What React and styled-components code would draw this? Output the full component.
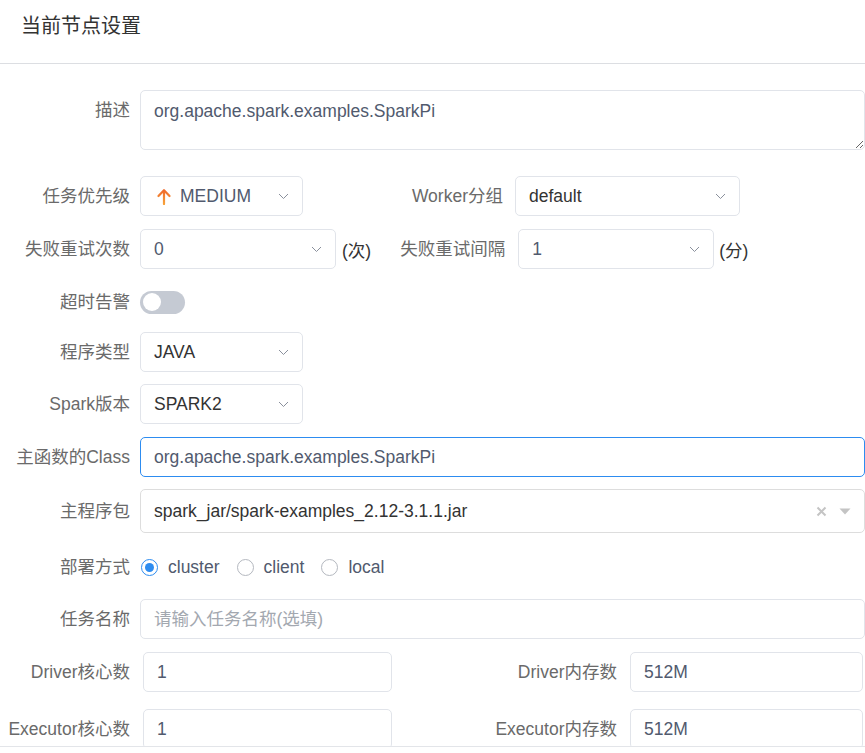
import React from "react";
import styled, { createGlobalStyle } from "styled-components";

const Global = createGlobalStyle`
  html, body { margin: 0; padding: 0; background: #fff; }
  body { font-family: "Liberation Sans", "Noto Sans CJK SC", sans-serif; }
  * { box-sizing: border-box; }
`;

const Page = styled.div`
  width: 865px;
  height: 753px;
  background: #fff;
  overflow: hidden;
`;

const Header = styled.div`
  height: 64px;
  border-bottom: 1px solid #dcdee2;
  padding: 12px 0 0 21px;
`;

const Title = styled.div`
  font-size: 20px;
  line-height: 28px;
  color: #333;
`;

const Body = styled.div`
  height: 683px;
  overflow: hidden;
  border-bottom: 1px solid #e3e5e9;
  padding-top: 26px;
`;

const Item = styled.div`
  display: flex;
  align-items: ${(p) => (p.$top ? "flex-start" : "center")};
  min-height: 40px;
  margin-bottom: ${(p) => p.$mb ?? 13}px;
`;

const Label = styled.div`
  width: ${(p) => p.$w ?? 130}px;
  flex: none;
  text-align: right;
  font-size: 17.5px;
  line-height: 40px;
  color: #6a6a6a;
  white-space: nowrap;
  margin-right: ${(p) => p.$mr ?? 10}px;
`;

const TextArea = styled.textarea`
  width: 725px;
  height: 60px;
  padding: 7px 13px;
  font-family: inherit;
  font-size: 17.5px;
  line-height: 1.5;
  color: #515a6e;
  border: 1px solid #e1e4ea;
  border-radius: 5px;
  resize: vertical;
  outline: none;
  display: block;
`;

const SelectBox = styled.div`
  width: ${(p) => p.$w}px;
  height: 40px;
  flex: none;
  display: flex;
  align-items: center;
  padding: 0 13px 0 13px;
  border: 1px solid #e1e4ea;
  border-radius: 5px;
  background: #fff;
`;

const SelectValue = styled.span`
  flex: 1;
  display: flex;
  align-items: center;
  font-size: 17.5px;
  color: ${(p) => p.$color ?? "#515a6e"};
  white-space: nowrap;
`;

const Unit = styled.span`
  font-size: 17.5px;
  color: #333;
  margin-left: ${(p) => p.$ml ?? 6}px;
  white-space: nowrap;
`;

const Input = styled.input`
  width: ${(p) => (p.$w ? `${p.$w}px` : "725px")};
  height: 40px;
  padding: 0 13px;
  font-family: inherit;
  font-size: 17.5px;
  color: #515a6e;
  border: 1px solid ${(p) => (p.$focus ? "#2d8cf0" : "#e1e4ea")};
  border-radius: 5px;
  outline: none;
  background: #fff;
  &::placeholder { color: #a3a8b0; }
`;

const Tree = styled.div`
  width: 725px;
  height: 44px;
  display: flex;
  align-items: center;
  padding: 0 13px;
  border: 1px solid #dddddd;
  border-radius: 5px;
`;

const TreeValue = styled.span`
  flex: 1;
  font-size: 17.5px;
  color: #333;
`;

const TreeIcons = styled.span`
  display: flex;
  align-items: center;
  gap: 12px;
  color: #c4c4c4;
`;

const Switch = styled.div`
  width: 45px;
  height: 23px;
  border-radius: 12px;
  background: #c5cad3;
  position: relative;
  &::after {
    content: "";
    position: absolute;
    left: 3px;
    top: 2.5px;
    width: 18px;
    height: 18px;
    border-radius: 50%;
    background: #fff;
  }
`;

const RadioGroup = styled.div`
  display: flex;
  align-items: center;
  gap: 17px;
  margin-left: 1px;
`;

const RadioItem = styled.label`
  display: flex;
  align-items: center;
  gap: 10px;
  font-size: 17.5px;
  color: #515a6e;
`;

const RadioDot = styled.span`
  width: 17px;
  height: 17px;
  border-radius: 50%;
  border: 1px solid ${(p) => (p.$on ? "#2d8cf0" : "#b4b8bf")};
  display: flex;
  align-items: center;
  justify-content: center;
  &::after {
    content: "";
    width: 9px;
    height: 9px;
    border-radius: 50%;
    background: ${(p) => (p.$on ? "#2d8cf0" : "transparent")};
  }
`;

const Pair = styled.div`
  display: grid;
  grid-template-columns: 130px 249px 212px 233px;
  column-gap: 13px;
  align-items: center;
  margin-bottom: ${(p) => p.$mb ?? 13}px;
`;

const PairLabel = styled.div`
  text-align: right;
  font-size: 17.5px;
  line-height: 40px;
  color: #6a6a6a;
  white-space: nowrap;
`;

const Chevron = () => (
  <svg width="11" height="7" viewBox="0 0 11 7" style={{ flex: "none" }}>
    <path d="M1 1 L5.5 5.5 L10 1" fill="none" stroke="#8a909c" strokeWidth="1" />
  </svg>
);

const UpArrow = () => (
  <svg width="14" height="17" viewBox="0 0 14 17" style={{ marginRight: 9, marginLeft: 3 }}>
    <defs>
      <linearGradient id="ag" x1="0" y1="0" x2="0" y2="1">
        <stop offset="0" stopColor="#ef6a2c" />
        <stop offset="1" stopColor="#f7a23a" />
      </linearGradient>
    </defs>
    <path d="M7 2.5 V16 M1.5 8 L7 2.2 L12.5 8" fill="none" stroke="url(#ag)" strokeWidth="2.2" strokeLinecap="round" strokeLinejoin="round" />
  </svg>
);

const Select = ({ w, children, color }) => (
  <SelectBox $w={w}>
    <SelectValue $color={color}>{children}</SelectValue>
    <Chevron />
  </SelectBox>
);

const Radio = ({ on, children }) => (
  <RadioItem>
    <RadioDot $on={on} />
    {children}
  </RadioItem>
);

export default function App() {
  return (
    <Page>
      <Global />
      <Header>
        <Title>当前节点设置</Title>
      </Header>
      <Body>
        <Item $top $mb={26}>
          <Label>描述</Label>
          <TextArea defaultValue="org.apache.spark.examples.SparkPi" />
        </Item>
        <Item>
          <Label>任务优先级</Label>
          <Select w={163}>
            <UpArrow />
            MEDIUM
          </Select>
          <Label $w={200} $mr={12}>Worker分组</Label>
          <Select w={225} color="#333">default</Select>
        </Item>
        <Item>
          <Label>失败重试次数</Label>
          <Select w={196}>0</Select>
          <Unit>(次)</Unit>
          <Label $w={134} $mr={13}>失败重试间隔</Label>
          <Select w={196}>1</Select>
          <Unit $ml={5}>(分)</Unit>
        </Item>
        <Item $mb={10}>
          <Label>超时告警</Label>
          <Switch />
        </Item>
        <Item $mb={12}>
          <Label>程序类型</Label>
          <Select w={163} color="#333">JAVA</Select>
        </Item>
        <Item>
          <Label>Spark版本</Label>
          <Select w={163} color="#333">SPARK2</Select>
        </Item>
        <Item $mb={12}>
          <Label>主函数的Class</Label>
          <Input $focus defaultValue="org.apache.spark.examples.SparkPi" />
        </Item>
        <Item $mb={14}>
          <Label>主程序包</Label>
          <Tree>
            <TreeValue>spark_jar/spark-examples_2.12-3.1.1.jar</TreeValue>
            <TreeIcons>
              <svg width="11" height="11" viewBox="0 0 11 11">
                <path d="M1.5 1.5 L9.5 9.5 M9.5 1.5 L1.5 9.5" stroke="#c4c4c4" strokeWidth="2" />
              </svg>
              <svg width="12" height="7" viewBox="0 0 12 7">
                <path d="M0.5 0.5 H11.5 L6 6.5 Z" fill="#c4c4c4" />
              </svg>
            </TreeIcons>
          </Tree>
        </Item>
        <Item $mb={12}>
          <Label>部署方式</Label>
          <RadioGroup>
            <Radio on>cluster</Radio>
            <Radio>client</Radio>
            <Radio>local</Radio>
          </RadioGroup>
        </Item>
        <Item>
          <Label>任务名称</Label>
          <Input placeholder="请输入任务名称(选填)" />
        </Item>
        <Pair $mb={17}>
          <PairLabel>Driver核心数</PairLabel>
          <Input $w={249} defaultValue="1" />
          <PairLabel>Driver内存数</PairLabel>
          <Input $w={233} defaultValue="512M" />
        </Pair>
        <Pair>
          <PairLabel>Executor核心数</PairLabel>
          <Input $w={249} defaultValue="1" />
          <PairLabel>Executor内存数</PairLabel>
          <Input $w={233} defaultValue="512M" />
        </Pair>
      </Body>
    </Page>
  );
}
